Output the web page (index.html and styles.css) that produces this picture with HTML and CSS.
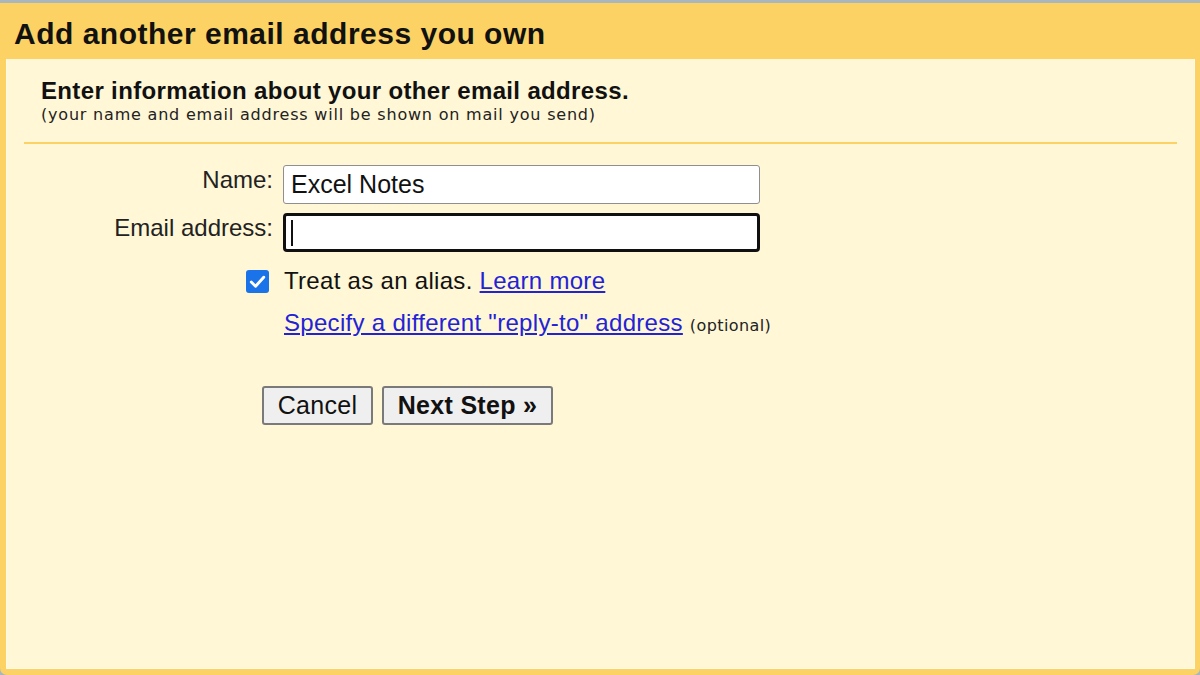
FILE: index.html
```html
<!DOCTYPE html>
<html>
<head>
<meta charset="utf-8">
<link rel="stylesheet" href="styles.css">
</head>
<body>
<div class="frame">
  <div class="title">Add another email address you own</div>
  <div class="panel">
    <div class="intro">
      <div class="intro-head">Enter information about your other email address.</div>
      <div class="intro-sub">(your name and email address will be shown on mail you send)</div>
    </div>
    <div class="sep"></div>
    <div class="form">
      <div class="row">
        <div class="label">Name:</div>
        <div class="field"><div class="input">Excel Notes</div></div>
      </div>
      <div class="row row-email">
        <div class="label">Email address:</div>
        <div class="field"><div class="input focused"><span class="caret"></span></div></div>
      </div>
      <div class="row row-check">
        <div class="label"><span class="checkbox"><svg viewBox="0 0 24 24" width="23" height="23"><path d="M5.5 12.5 L10 17 L18.5 7.5" fill="none" stroke="#fff" stroke-width="3" stroke-linecap="round" stroke-linejoin="round"/></svg></span></div>
        <div class="field text">Treat as an alias. <a class="link" href="#">Learn more</a></div>
      </div>
      <div class="row row-reply">
        <div class="label"></div>
        <div class="field text nowrap"><a class="link" href="#">Specify a different "reply-to" address</a> <span class="optional">(optional)</span></div>
      </div>
      <div class="buttons">
        <button class="btn">Cancel</button>
        <button class="btn btn-bold">Next Step »</button>
      </div>
    </div>
  </div>
</div>
</body>
</html>
```
FILE: styles.css
```css
html, body {
  margin: 0;
  padding: 0;
}
body {
  background: #a9b6bd;
  width: 1200px;
  height: 675px;
  overflow: hidden;
  font-family: "Liberation Sans", Arial, sans-serif;
  color: #000;
}
.frame {
  box-sizing: border-box;
  width: 1200px;
  height: 672px;
  margin-top: 3px;
  background: #fcd264;
  border-radius: 0 0 7px 7px;
  padding: 0 5px 6px 6px;
  display: flex;
  flex-direction: column;
}
.title {
  height: 56px;
  box-sizing: border-box;
  padding: 6px 0 0 8px;
  line-height: 50px;
  font-size: 30px;
  letter-spacing: 0.5px;
  font-weight: bold;
  color: #111;
}
.panel {
  flex: 1;
  background: #fff7d6;
  border: 1px solid #fffbe8;
  border-top: none;
  display: flex;
  flex-direction: column;
}
.intro {
  padding: 18px 0 0 34px;
  height: 65px;
}
.intro-head {
  font-size: 24px;
  font-weight: bold;
  line-height: 27px;
  letter-spacing: 0.35px;
  color: #111;
}
.intro-sub {
  font-family: "DejaVu Sans", Verdana, sans-serif;
  font-size: 16px;
  line-height: 18px;
  margin-top: 2px;
  letter-spacing: 0.8px;
  color: #222;
}
.sep {
  height: 2px;
  background: #fcd264;
  margin: 0 17px 0 17px;
}
.form {
  padding-top: 21px;
  display: flex;
  flex-direction: column;
}
.row {
  display: flex;
  gap: 10px;
}
.label {
  width: 266px;
  text-align: right;
  font-size: 24px;
  line-height: 28px;
  padding-top: 1px;
  color: #222;
}
.field {
  width: 477px;
}
.nowrap {
  white-space: nowrap;
}
.input {
  box-sizing: border-box;
  height: 39px;
  border: 1px solid #8f8f8f;
  border-radius: 3px;
  background: #fff;
  font-size: 25px;
  line-height: 37px;
  padding-left: 7px;
  color: #111;
}
.input.focused {
  border: 3px solid #101010;
  border-radius: 4px;
  padding-left: 5px;
  display: flex;
  align-items: center;
}
.caret {
  display: block;
  width: 2px;
  height: 26px;
  background: #111;
}
.row-email {
  margin-top: 9px;
}
.row-check {
  margin-top: 15px;
  align-items: center;
}
.row-check .label {
  padding-top: 0;
  display: flex;
  justify-content: flex-end;
  padding-right: 4px;
  width: 262px;
}
.checkbox {
  display: block;
  width: 23px;
  height: 23px;
  border-radius: 3px;
  background: #1a73e8;
}
.checkbox svg {
  display: block;
}
.text {
  font-size: 24px;
  line-height: 28px;
  letter-spacing: 0.3px;
  padding-left: 1px;
  color: #111;
}
.link {
  color: #2323d6;
  text-decoration: underline;
}
.row-reply {
  margin-top: 14px;
}
.optional {
  font-family: "DejaVu Sans", Verdana, sans-serif;
  font-size: 16px;
  letter-spacing: 0.4px;
  color: #222;
}
.buttons {
  display: flex;
  gap: 9px;
  padding-left: 255px;
  margin-top: 46px;
}
.btn {
  box-sizing: border-box;
  height: 39px;
  padding: 0;
  background: #efefef;
  border: 2px solid #7a7a7a;
  border-radius: 3px;
  font-family: "Liberation Sans", Arial, sans-serif;
  font-size: 25px;
  letter-spacing: 0.3px;
  color: #111;
  width: 111px;
}
.btn-bold {
  font-weight: bold;
  width: 171px;
}
```
